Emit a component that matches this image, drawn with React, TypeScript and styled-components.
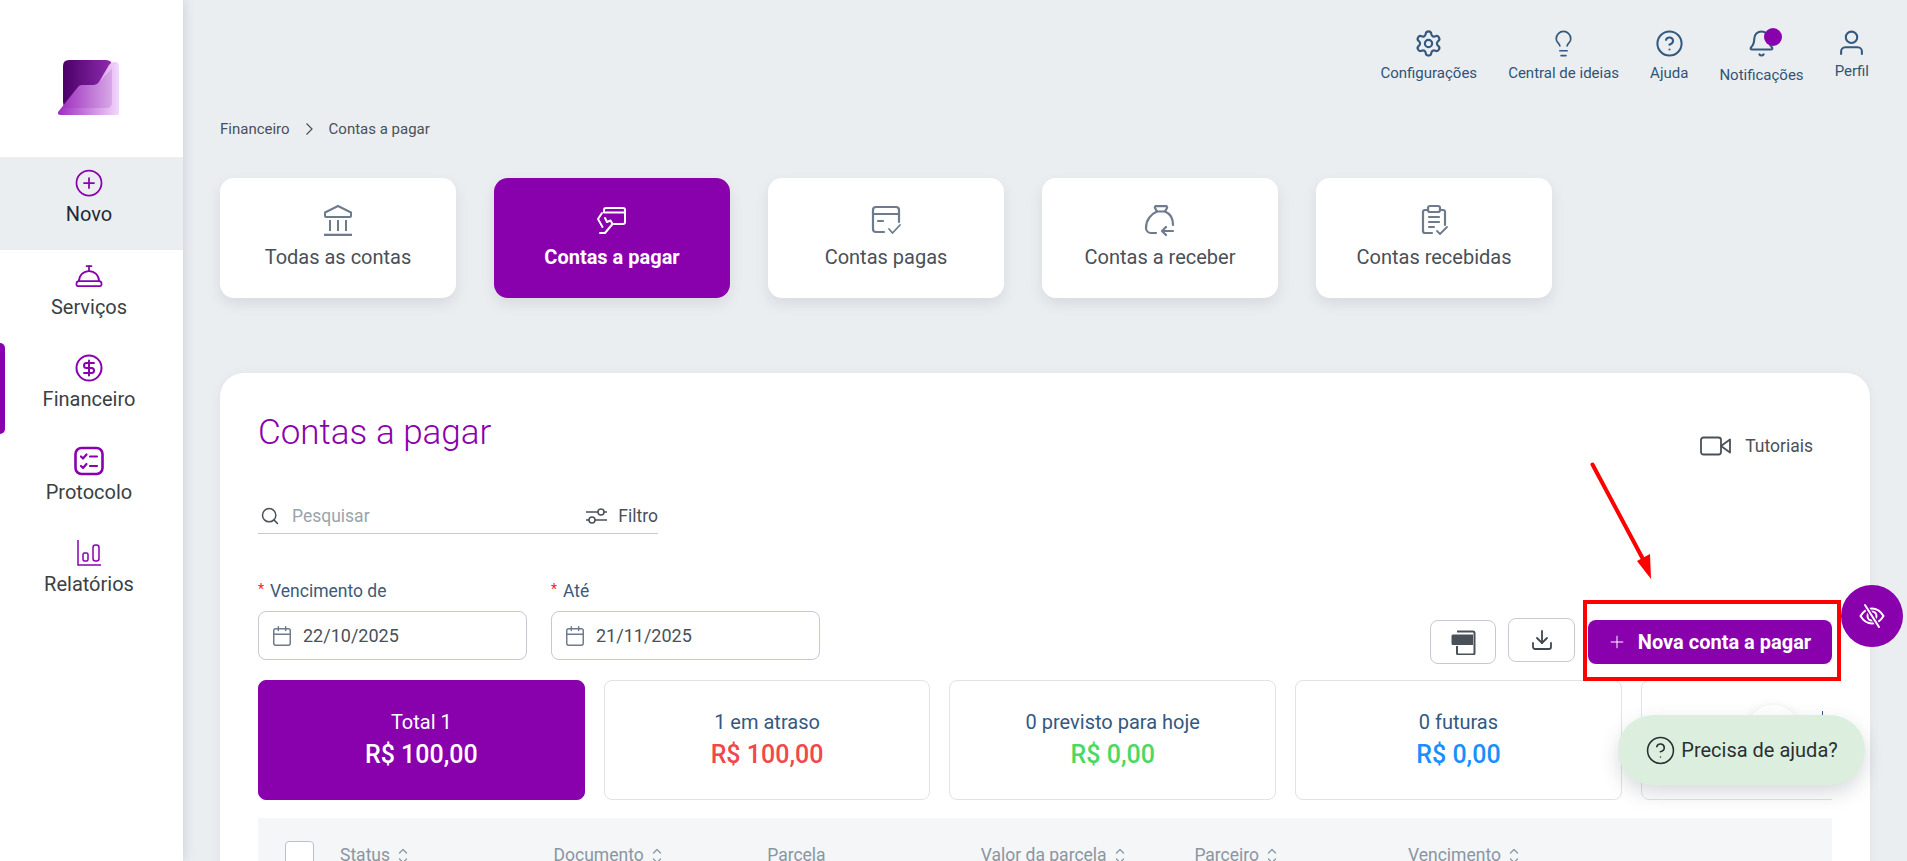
import React from 'react';
import styled, { createGlobalStyle } from 'styled-components';
import {
  Bell,
  Calendar,
  CircleDollarSign,
  CircleHelp,
  CirclePlus,
  ConciergeBell,
  Download,
  Lightbulb,
  Plus,
  Search,
  Settings,
} from 'lucide-react';

const PURPLE = '#8900ad';

const GlobalStyle = createGlobalStyle`
  html, body {
    margin: 0;
    height: 100%;
    overflow: hidden;
    background: #ebeef1;
    font-family: Roboto, "Liberation Sans", sans-serif;
  }
  * { box-sizing: border-box; }
`;

// layout
const Page = styled.div`
  display: flex;
  width: 1907px;
  height: 861px;
  overflow: hidden;
  position: relative;
`;

const Sidebar = styled.aside`
  flex: 0 0 183px;
  height: 100%;
  background: #fff;
  box-shadow: 2px 0 10px rgba(90, 100, 115, 0.18);
  padding-top: 59px;
  position: relative;
  z-index: 2;
`;

const Logo = styled.div`
  width: 61px;
  height: 56px;
  margin-left: 58px;
  margin-bottom: 42px;
`;

const NavItem = styled.div<{ $active?: boolean }>`
  height: 92.5px;
  display: flex;
  flex-direction: column;
  align-items: center;
  padding: 11px 5px 0 0;
  background: ${(p) => (p.$active ? '#ebeef1' : '#fff')};
  color: ${(p) => (p.$active ? '#1f2937' : '#3a3f45')};
  font-size: 20px;
  line-height: 24px;
  svg {
    color: ${PURPLE};
    display: block;
    margin-bottom: 4px;
  }
`;

const Indicator = styled.div`
  position: absolute;
  left: 0;
  top: 343px;
  width: 5px;
  height: 91px;
  background: ${PURPLE};
  border-radius: 0 6px 6px 0;
`;

const Main = styled.main`
  flex: 1;
  padding: 0 37px;
  min-width: 0;
`;

const TopBar = styled.div`
  display: flex;
  justify-content: flex-end;
  gap: 31px;
  height: 120px;
  padding-top: 29px;
  padding-right: 1px;
`;

const TopItem = styled.div<{ $low?: boolean }>`
  display: flex;
  flex-direction: column;
  align-items: center;
  color: #2f5477;
  font-size: 15px;
  line-height: 18px;
  position: relative;
  svg {
    color: #33597f;
    display: block;
    margin-bottom: ${(p) => (p.$low ? '8px' : '6px')};
  }
`;

const Dot = styled.span`
  position: absolute;
  width: 18px;
  height: 18px;
  border-radius: 50%;
  background: ${PURPLE};
  top: -1px;
  left: 45px;
`;

const Breadcrumb = styled.div`
  display: flex;
  align-items: center;
  height: 18px;
  font-size: 15px;
  color: #4a5058;
  gap: 15px;
  svg {
    display: block;
  }
`;

const Tabs = styled.div`
  display: flex;
  gap: 38px;
  margin-top: 40px;
`;

const Tab = styled.div<{ $active?: boolean }>`
  width: 236px;
  height: 120px;
  border-radius: 14px;
  display: flex;
  flex-direction: column;
  align-items: center;
  padding-top: 26px;
  background: ${(p) => (p.$active ? PURPLE : '#fff')};
  color: ${(p) => (p.$active ? '#fff' : '#495058')};
  font-size: 20px;
  font-weight: ${(p) => (p.$active ? 700 : 400)};
  box-shadow: 0 6px 14px rgba(90, 100, 115, 0.14);
  svg {
    display: block;
    margin-bottom: 9px;
    color: ${(p) => (p.$active ? '#fff' : '#6d7b8c')};
  }
`;

const Card = styled.section`
  margin-top: 75px;
  height: 600px;
  background: #fff;
  border-radius: 24px;
  padding: 38px 38px 0;
  box-shadow: 0 2px 10px rgba(90, 100, 115, 0.1);
`;

const TitleRow = styled.div`
  display: flex;
  justify-content: space-between;
  align-items: flex-start;
`;

const Title = styled.h1`
  margin: 0;
  font-weight: 300;
  font-size: 35px;
  line-height: 42px;
  padding-top: 1px;
  color: ${PURPLE};
`;

const Tutorials = styled.div`
  display: flex;
  align-items: center;
  gap: 14px;
  color: #4a5058;
  font-size: 17.5px;
  margin-top: 25px;
  margin-right: 19px;
  svg {
    display: block;
  }
`;

const SearchBar = styled.div`
  width: 400px;
  height: 33px;
  margin-top: 45px;
  border-bottom: 1px solid #c3cad3;
  display: flex;
  align-items: center;
  padding: 0 0 2px 2px;
  color: #4a5058;
  font-size: 17.5px;
  svg {
    display: block;
  }
`;

const Placeholder = styled.span`
  color: #9aa3ad;
  margin-left: 12px;
  flex: 1;
`;

const FilterLabel = styled.span`
  margin-left: 10px;
`;

const ControlRow = styled.div`
  display: flex;
  align-items: flex-end;
  margin-top: 45px;
`;

const Field = styled.div`
  width: 269px;
  margin-right: 24px;
  margin-bottom: 4px;
`;

const FieldLabel = styled.label`
  display: block;
  color: #3d5a78;
  font-size: 17.5px;
  line-height: 20px;
  margin-bottom: 10px;
  &::before {
    content: '*';
    color: #f5222d;
    font-size: 14px;
    margin-right: 6px;
    vertical-align: 3px;
  }
`;

const DateBox = styled.div`
  height: 49px;
  border: 1px solid #c3cad3;
  border-radius: 8px;
  display: flex;
  align-items: center;
  gap: 10px;
  padding-left: 12px;
  color: #4a5058;
  font-size: 18px;
  svg {
    display: block;
    color: #6d7b8c;
  }
`;

const Actions = styled.div`
  margin-left: auto;
  display: flex;
  align-items: flex-end;
  gap: 12px;
`;

const IconButton = styled.button<{ $raised?: boolean; $wide?: boolean }>`
  width: ${(p) => (p.$wide ? '67px' : '66px')};
  height: 44px;
  margin-bottom: ${(p) => (p.$raised ? '2px' : '0')};
  background: #fff;
  border: 1px solid #c3cad3;
  border-radius: 8px;
  display: flex;
  align-items: center;
  justify-content: center;
  padding: 0;
  color: #3f4750;
  svg {
    display: block;
  }
`;

const PrimaryButton = styled.button`
  width: 244px;
  height: 44px;
  margin-left: 1px;
  background: ${PURPLE};
  border: 0;
  border-radius: 8px;
  color: #fff;
  font-family: inherit;
  font-size: 20px;
  font-weight: 700;
  display: flex;
  align-items: center;
  justify-content: center;
  gap: 11px;
  padding: 0 2px 0 0;
  svg {
    display: block;
  }
`;

const Stats = styled.div`
  display: flex;
  gap: 19px;
  margin-top: 16px;
  overflow: hidden;
`;

const Stat = styled.div<{ $active?: boolean }>`
  flex: 0 0 326.7px;
  height: 120px;
  border-radius: 8px;
  border: 1px solid ${(p) => (p.$active ? PURPLE : '#dfe2e6')};
  background: ${(p) => (p.$active ? PURPLE : '#fff')};
  display: flex;
  flex-direction: column;
  align-items: center;
  padding-top: 29px;
`;

const StatLabel = styled.span<{ $active?: boolean }>`
  color: ${(p) => (p.$active ? '#fff' : '#33597f')};
  font-size: 20px;
  line-height: 24px;
`;

const StatValue = styled.span<{ $color: string }>`
  color: ${(p) => p.$color};
  font-size: 25px;
  font-weight: 500;
  line-height: 32px;
  margin-top: 5px;
`;

const TableHead = styled.div`
  height: 60px;
  margin-top: 18px;
  background: #f4f6f8;
  display: flex;
  padding: 23px 0 0 27px;
  color: #8a95a1;
  font-size: 17.5px;
`;

const Checkbox = styled.span`
  flex: 0 0 29px;
  height: 29px;
  border: 1px solid #b9c1cb;
  border-radius: 4px;
  background: #fff;
  margin-right: 26px;
`;

const HeadCell = styled.div`
  flex: 0 0 213.6px;
  display: flex;
  align-items: flex-start;
  gap: 8px;
  line-height: 28px;
  svg {
    display: block;
    margin-top: 7px;
  }
`;

const EyeFab = styled.div`
  position: absolute;
  left: 1841px;
  top: 585px;
  width: 62px;
  height: 62px;
  border-radius: 50%;
  background: ${PURPLE};
  color: #fff;
  display: flex;
  align-items: center;
  justify-content: center;
  z-index: 5;
`;

const HelpGhost = styled.div`
  position: absolute;
  left: 1746px;
  top: 705px;
  width: 54px;
  height: 54px;
  border-radius: 50%;
  background: #fff;
  box-shadow: 0 0 8px rgba(90, 100, 115, 0.12);
  z-index: 4;
`;

// topo de uma letra do quinto card, que aparece acima do balao de ajuda
const PeekMark = styled.span`
  position: absolute;
  left: 1822px;
  top: 711px;
  width: 1px;
  height: 4px;
  background: #33597f;
  z-index: 4;
`;

const HelpPill = styled.div`
  position: absolute;
  left: 1618px;
  top: 715px;
  width: 247px;
  height: 70px;
  border-radius: 35px;
  background: #dcefdf;
  color: #2b2f33;
  font-size: 20px;
  display: flex;
  align-items: center;
  justify-content: center;
  gap: 5px;
  box-shadow: 0 8px 20px rgba(60, 70, 80, 0.2);
  z-index: 5;
  svg {
    display: block;
  }
`;

const Annotation = styled.svg`
  position: absolute;
  left: 0;
  top: 0;
  z-index: 6;
  pointer-events: none;
`;

// icones desenhados
const LogoMark = () => (
  <svg width="61" height="56" viewBox="0 0 61 56">
    <defs>
      <linearGradient id="lgBack" x1="0" y1="0" x2="1" y2="0">
        <stop offset="0" stopColor="#4b0068" />
        <stop offset="1" stopColor="#8f2bb0" />
      </linearGradient>
      <linearGradient id="lgFront" x1="0" y1="0" x2="1" y2="0">
        <stop offset="0" stopColor="#a02cc2" />
        <stop offset="1" stopColor="#f3d8fc" />
      </linearGradient>
    </defs>
    <path d="M5 7Q5 1 11 1H48Q54 1 54 7V43Q54 49 48 49H11Q5 49 5 43Z" fill="url(#lgBack)" />
    <path d="M0 53L20 28Q21 26 24 26H36Q39 26 41 23L51 6Q53 3 57 3Q61 3 61 7V54Q61 56 58 56H3Q-1 56 0 53Z" fill="url(#lgFront)" />
    <path d="M5 49H48Q54 49 54 43V9.5L41 23Q39 26 36 26H24Q21 26 20 28L5 47Z" fill="#7a1a9e" fillOpacity="0.16" />
  </svg>
);

const ProtocolIcon = () => (
  <svg width="30" height="30" viewBox="0 0 30 30" fill="none" stroke="currentColor" strokeLinecap="round" strokeLinejoin="round">
    <rect x="1.5" y="2" width="27" height="26" rx="6" strokeWidth="2.6" />
    <path d="M7 10.5l2 2 3.5-4M7 20l2 2 3.5-4M16 10.5h7M16 20h7" strokeWidth="2.2" />
  </svg>
);

const ReportIcon = () => (
  <svg width="26" height="30" viewBox="0 0 26 30" fill="none" stroke="currentColor" strokeWidth="1.5">
    <path d="M2 2V27H25" />
    <rect x="7" y="15" width="5" height="8" rx="1.5" />
    <rect x="17" y="7" width="6" height="16" rx="2.5" />
  </svg>
);

const UserIcon = () => (
  <svg width="27" height="27" viewBox="0 0 26 26" fill="none" stroke="currentColor" strokeWidth="2" strokeLinecap="round">
    <circle cx="13" cy="8" r="5.5" />
    <path d="M3 24v-2.5a4 4 0 0 1 4-4h12a4 4 0 0 1 4 4V24" />
  </svg>
);

const BankIcon = () => (
  <svg width="32" height="32" viewBox="0 0 32 32" fill="none" stroke="currentColor" strokeWidth="2">
    <path d="M16 2L3 8.5V12a1 1 0 0 0 1 1h24a1 1 0 0 0 1-1V8.5z" strokeLinejoin="round" />
    <path d="M8 16v11M16 16v11M24 16v11" />
    <path d="M2 31h28" strokeWidth="2.6" />
  </svg>
);

const HandCardIcon = () => (
  <svg width="32" height="32" viewBox="0 0 32 32" fill="none" stroke="currentColor" strokeWidth="2" strokeLinecap="round" strokeLinejoin="round">
    <path d="M8 8V6a2 2 0 0 1 2-2H27a2 2 0 0 1 2 2V18a2 2 0 0 1-2 2H18" />
    <path d="M8 8.5H29" />
    <path d="M6 9L2 15l4.5 8" />
    <path d="M4 29H9l7.5-9-2-3.5L11 18l-2-4" />
  </svg>
);

const CardCheckIcon = () => (
  <svg width="32" height="32" viewBox="0 0 32 32" fill="none" stroke="currentColor" strokeWidth="2.2" strokeLinecap="round" strokeLinejoin="round">
    <path d="M14 28H6a3 3 0 0 1-3-3V6a3 3 0 0 1 3-3h20a3 3 0 0 1 3 3v12" />
    <path d="M3 10h26" />
    <path d="M8 17h5" />
    <path d="M19 25l3.5 4L30 21" strokeWidth="1.8" />
  </svg>
);

const BagIcon = () => (
  <svg width="32" height="32" viewBox="0 0 32 32" fill="none" stroke="currentColor" strokeWidth="2.2" strokeLinecap="round" strokeLinejoin="round">
    <path d="M13 7.5h8l2-3.5a1.2 1.2 0 0 0-1-1.8H12a1.2 1.2 0 0 0-1 1.8z" />
    <path d="M13 7.5C7 10 2 16 2 24a5 5 0 0 0 5 5h5" />
    <path d="M21 7.5c5 2 8 7 8 13.5" />
    <path d="M29 27H18M22 23l-4 4 4 4" />
  </svg>
);

const ClipboardIcon = () => (
  <svg width="32" height="32" viewBox="0 0 32 32" fill="none" stroke="currentColor" strokeWidth="2.2" strokeLinecap="round" strokeLinejoin="round">
    <path d="M10 6H7a2 2 0 0 0-2 2v19a2 2 0 0 0 2 2h7" />
    <path d="M22 6h3a2 2 0 0 1 2 2v13" />
    <rect x="10" y="2" width="12" height="6" rx="2" />
    <path d="M11 13h10M11 18h10M11 23h5" />
    <path d="M19 27l3 3 7-7" strokeWidth="1.8" />
  </svg>
);

const FilterIcon = () => (
  <svg width="23" height="18" viewBox="0 0 23 18" fill="none" stroke="currentColor" strokeWidth="1.5">
    <path d="M1 5h12M19 5h3M1 13h3M10 13h12" />
    <circle cx="16" cy="5" r="3" />
    <circle cx="7" cy="13" r="3" />
  </svg>
);

const VideoIcon = () => (
  <svg width="31" height="20" viewBox="0 0 31 20" fill="none" stroke="currentColor" strokeWidth="1.8" strokeLinejoin="round">
    <rect x="1" y="1.5" width="20" height="17" rx="2.5" />
    <path d="M21 10l9-6.5v13z" />
  </svg>
);

const CopyIcon = () => (
  <svg width="25" height="25" viewBox="0 0 25 25">
    <path d="M6 1.5h16a1.5 1.5 0 0 1 1.5 1.5v20a1.5 1.5 0 0 1-1.5 1.5H7.5A1.5 1.5 0 0 1 6 23V16" fill="none" stroke="#4a5058" strokeWidth="2" />
    <path d="M2 4.5h20V15H2a1.5 1.5 0 0 1-1.5-1.5V6A1.5 1.5 0 0 1 2 4.5z" fill="#4a5058" />
  </svg>
);

const EyeOffIcon = () => (
  <svg width="26" height="26" viewBox="0 0 26 26" fill="none" stroke="currentColor" strokeWidth="2" strokeLinecap="round" strokeLinejoin="round">
    <path d="M1.5 13C4.5 8 8.5 5.5 13 5.5S21.5 8 24.5 13C21.5 18 17.5 20.5 13 20.5S4.5 18 1.5 13z" />
    <circle cx="13" cy="13" r="4.5" />
    <path d="M6 2l14 22" stroke="#8900ad" strokeWidth="4.5" />
    <path d="M6 2l14 22" />
  </svg>
);

const SortIcon = () => (
  <svg width="10" height="16" viewBox="0 0 10 16" fill="none" stroke="currentColor" strokeWidth="1.2" strokeLinecap="round" strokeLinejoin="round">
    <path d="M1.5 5L5 1.5 8.5 5M1.5 11L5 14.5 8.5 11" />
  </svg>
);

const ChevronIcon = () => (
  <svg width="9" height="14" viewBox="0 0 9 14" fill="none" stroke="#4a5058" strokeWidth="1.2">
    <path d="M1.5 1.5L7 7l-5.5 5.5" />
  </svg>
);

const navItems = [
  { label: 'Novo', icon: <CirclePlus size={30} strokeWidth={1.4} />, active: true },
  { label: 'Serviços', icon: <ConciergeBell size={30} strokeWidth={1.4} /> },
  { label: 'Financeiro', icon: <CircleDollarSign size={30} strokeWidth={1.6} /> },
  { label: 'Protocolo', icon: <ProtocolIcon /> },
  { label: 'Relatórios', icon: <ReportIcon /> },
];

const tabs = [
  { label: 'Todas as contas', icon: <BankIcon /> },
  { label: 'Contas a pagar', icon: <HandCardIcon />, active: true },
  { label: 'Contas pagas', icon: <CardCheckIcon /> },
  { label: 'Contas a receber', icon: <BagIcon /> },
  { label: 'Contas recebidas', icon: <ClipboardIcon /> },
];

const stats = [
  { label: 'Total 1', value: 'R$ 100,00', color: '#fff', active: true },
  { label: '1 em atraso', value: 'R$ 100,00', color: '#f0484b' },
  { label: '0 previsto para hoje', value: 'R$ 0,00', color: '#4bd964' },
  { label: '0 futuras', value: 'R$ 0,00', color: '#1890ff' },
  { label: '', value: '', color: '#fff' },
];

const columns = [
  { label: 'Status', sort: true },
  { label: 'Documento', sort: true },
  { label: 'Parcela', sort: false },
  { label: 'Valor da parcela', sort: true },
  { label: 'Parceiro', sort: true },
  { label: 'Vencimento', sort: true },
];

const App = () => {
  return (
    <Page>
      <GlobalStyle />
      <Sidebar>
        <Indicator />
        <Logo>
          <LogoMark />
        </Logo>
        {navItems.map((item) => (
          <NavItem key={item.label} $active={item.active}>
            {item.icon}
            {item.label}
          </NavItem>
        ))}
      </Sidebar>
      <Main>
        <TopBar>
          <TopItem>
            <Settings size={29} strokeWidth={1.8} />
            Configurações
          </TopItem>
          <TopItem>
            <Lightbulb size={29} strokeWidth={1.4} />
            Central de ideias
          </TopItem>
          <TopItem>
            <CircleHelp size={29} strokeWidth={1.7} />
            Ajuda
          </TopItem>
          <TopItem $low>
            <Bell size={29} strokeWidth={1.7} />
            <Dot />
            Notificações
          </TopItem>
          <TopItem>
            <UserIcon />
            Perfil
          </TopItem>
        </TopBar>
        <Breadcrumb>
          <span>Financeiro</span>
          <ChevronIcon />
          <span>Contas a pagar</span>
        </Breadcrumb>
        <Tabs>
          {tabs.map((tab) => (
            <Tab key={tab.label} $active={tab.active}>
              {tab.icon}
              {tab.label}
            </Tab>
          ))}
        </Tabs>
        <Card>
          <TitleRow>
            <Title>Contas a pagar</Title>
            <Tutorials>
              <VideoIcon />
              Tutoriais
            </Tutorials>
          </TitleRow>
          <SearchBar>
            <Search size={20} strokeWidth={1.8} />
            <Placeholder>Pesquisar</Placeholder>
            <FilterIcon />
            <FilterLabel>Filtro</FilterLabel>
          </SearchBar>
          <ControlRow>
            <Field>
              <FieldLabel>Vencimento de</FieldLabel>
              <DateBox>
                <Calendar size={22} strokeWidth={1.6} />
                22/10/2025
              </DateBox>
            </Field>
            <Field>
              <FieldLabel>Até</FieldLabel>
              <DateBox>
                <Calendar size={22} strokeWidth={1.6} />
                21/11/2025
              </DateBox>
            </Field>
            <Actions>
              <IconButton>
                <CopyIcon />
              </IconButton>
              <IconButton $raised $wide>
                <Download size={24} strokeWidth={1.8} />
              </IconButton>
              <PrimaryButton>
                <Plus size={20} strokeWidth={1.2} />
                Nova conta a pagar
              </PrimaryButton>
            </Actions>
          </ControlRow>
          <Stats>
            {stats.map((stat, i) => (
              <Stat key={i} $active={stat.active}>
                <StatLabel $active={stat.active}>{stat.label}</StatLabel>
                <StatValue $color={stat.color}>{stat.value}</StatValue>
              </Stat>
            ))}
          </Stats>
          <TableHead>
            <Checkbox />
            {columns.map((col) => (
              <HeadCell key={col.label}>
                {col.label}
                {col.sort && <SortIcon />}
              </HeadCell>
            ))}
          </TableHead>
        </Card>
      </Main>
      <EyeFab>
        <EyeOffIcon />
      </EyeFab>
      <HelpGhost />
      <PeekMark />
      <HelpPill>
        <CircleHelp size={31} strokeWidth={1.2} />
        Precisa de ajuda?
      </HelpPill>
      <Annotation width="1907" height="861">
        <rect x="1585" y="602" width="254" height="77" fill="none" stroke="#fe0000" strokeWidth="4" />
        <path d="M1592.5 464.5L1644 561" stroke="#fe0000" strokeWidth="4" strokeLinecap="round" />
        <path d="M1651 579l-14-18 13-7z" fill="#fe0000" />
      </Annotation>
    </Page>
  );
};

export default App;
